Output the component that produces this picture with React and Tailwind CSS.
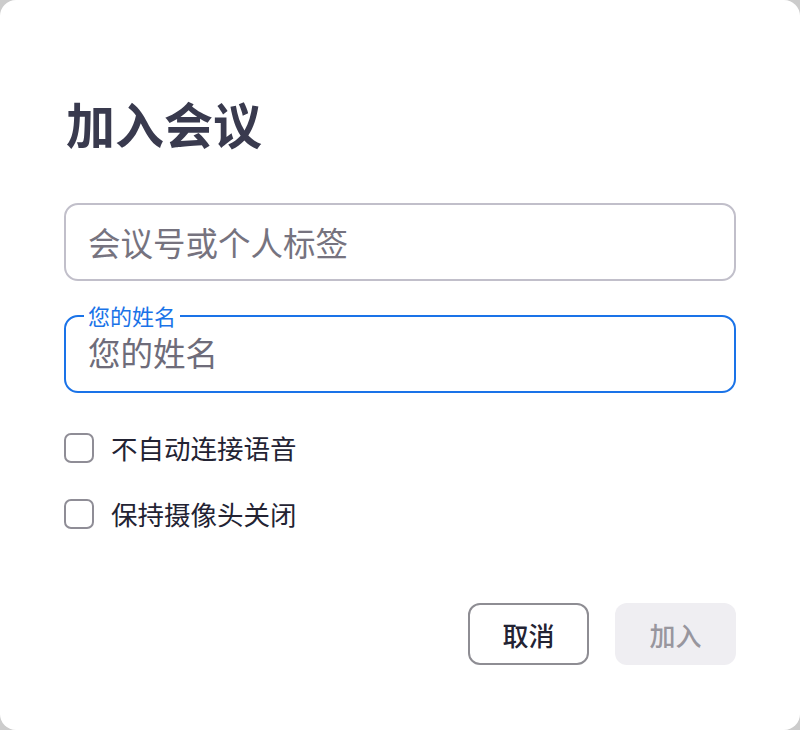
import React, { useState } from "react";

const font = { fontFamily: '"Noto Sans CJK SC", "Noto Sans", sans-serif' };

function Check({ label, checked, onChange }) {
  return (
    <label className="flex items-center gap-[17px] cursor-pointer select-none">
      <span
        onClick={onChange}
        className={`w-[30px] h-[30px] rounded-[7px] border-2 ${checked ? "border-[#0e72ed] bg-[#0e72ed]" : "border-[#8f8d96] bg-white"}`}
      />
      <span className="text-[26.5px] leading-[30px] text-[#232333]">{label}</span>
    </label>
  );
}

export default function App() {
  const [meeting, setMeeting] = useState("");
  const [name, setName] = useState("");
  const [noAudio, setNoAudio] = useState(false);
  const [noVideo, setNoVideo] = useState(false);

  return (
    <div className="w-[800px] h-[730px] bg-[#cccccc]" style={font}>
      <div className="w-full h-full bg-white rounded-[16px] px-16 pt-[98px] flex flex-col">
        <h1 className="text-[49px] leading-[49px] font-bold text-[#393a4e] ml-[2px]">加入会议</h1>

        <div className="mt-[56px] h-[78px] border-2 border-[#c1bfca] rounded-[14px] flex items-center px-[22px]">
          <input
            className="w-full bg-transparent outline-none text-[32.5px] text-[#232333] placeholder:text-[#76737f]"
            placeholder="会议号或个人标签"
            value={meeting}
            onChange={(e) => setMeeting(e.target.value)}
          />
        </div>

        <div className="relative mt-[34px] h-[78px] border-2 border-[#1a73e8] rounded-[14px] flex items-center px-[22px]">
          <span className="absolute -top-[13px] left-[18px] bg-white px-[4px] text-[22px] leading-[22px] text-[#1a73e8]">
            您的姓名
          </span>
          <input
            className="w-full bg-transparent outline-none text-[32.5px] text-[#232333] placeholder:text-[#6e6c7a] -mt-[4px]"
            placeholder="您的姓名"
            value={name}
            onChange={(e) => setName(e.target.value)}
          />
        </div>

        <div className="mt-[40px] flex flex-col gap-[36px]">
          <Check label="不自动连接语音" checked={noAudio} onChange={() => setNoAudio((v) => !v)} />
          <Check label="保持摄像头关闭" checked={noVideo} onChange={() => setNoVideo((v) => !v)} />
        </div>

        <div className="mt-[74px] flex justify-end gap-[26px]">
          <button className="w-[121px] h-[62px] border-2 border-[#8e8d93] rounded-[12px] text-[26px] font-medium text-[#232333] bg-white">
            取消
          </button>
          <button
            disabled={!meeting}
            className="w-[121px] h-[62px] rounded-[12px] text-[26px] font-medium bg-[#efeef2] text-[#98969e]"
          >
            加入
          </button>
        </div>
      </div>
    </div>
  );
}
